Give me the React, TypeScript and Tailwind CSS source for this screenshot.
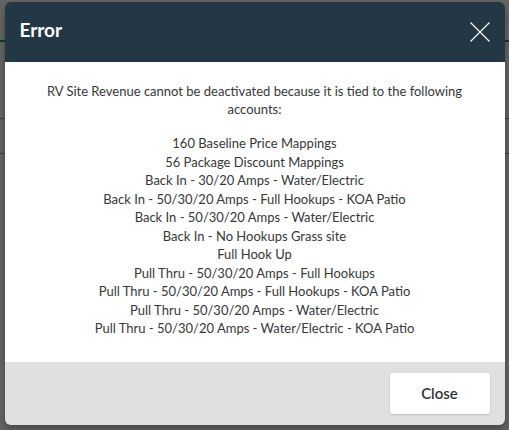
const ACCOUNTS = [
  '160 Baseline Price Mappings',
  '56 Package Discount Mappings',
  'Back In - 30/20 Amps - Water/Electric',
  'Back In - 50/30/20 Amps - Full Hookups - KOA Patio',
  'Back In - 50/30/20 Amps - Water/Electric',
  'Back In - No Hookups Grass site',
  'Full Hook Up',
  'Pull Thru - 50/30/20 Amps - Full Hookups',
  'Pull Thru - 50/30/20 Amps - Full Hookups - KOA Patio',
  'Pull Thru - 50/30/20 Amps - Water/Electric',
  'Pull Thru - 50/30/20 Amps - Water/Electric - KOA Patio',
]

export default function App() {
  return (
    <div
      className="relative h-[430px] w-[509px] overflow-hidden bg-white"
      style={{ fontFamily: 'Lato, "Open Sans", sans-serif' }}
    >
      {/* page behind the overlay */}
      <div className="flex flex-col">
        <div className="h-[42px] border-b-2 border-[#2e9a4a]" />
        <div className="h-[77px] border-b border-[#999]" />
        <div className="h-[35px] border-b border-[#999]" />
      </div>

      {/* overlay */}
      <div className="absolute inset-0 flex justify-center bg-black/60 pt-[2px]">
        <div className="flex h-[423px] w-[500px] flex-col overflow-hidden rounded-[6px] shadow-[0_4px_10px_rgba(0,0,0,0.35)]">
          {/* Header */}
          <div className="flex h-[60px] shrink-0 items-center justify-between bg-[#243744] pb-[3px] pl-[15px] pr-[15px]">
            <h2 className="text-[19px] font-bold text-white">Error</h2>
            <button className="mt-[3px] text-white">
              <svg width="20" height="20" viewBox="0 0 20 20" fill="none" stroke="currentColor" strokeWidth="1.1">
                <line x1="0.5" y1="0.5" x2="19.5" y2="19.5" />
                <line x1="19.5" y1="0.5" x2="0.5" y2="19.5" />
              </svg>
            </button>
          </div>

          {/* Content */}
          <div className="flex-1 bg-white px-[30px] pt-[20px] text-center text-[13px] text-[#383838]">
            <p className="leading-[18px]">
              RV Site Revenue cannot be deactivated because it is tied to the following accounts:
            </p>
            <ul className="mt-[16px] leading-[18.5px]">
              {ACCOUNTS.map((a) => (
                <li key={a}>{a}</li>
              ))}
            </ul>
          </div>

          {/* Footer */}
          <div className="flex h-[63px] shrink-0 items-center justify-end bg-[#e0e0e0] pr-[15px]">
            <button className="h-[41px] w-[100px] rounded-[3px] bg-white text-[15px] font-semibold text-[#333] shadow-[0_1px_2px_rgba(0,0,0,0.15)]">
              Close
            </button>
          </div>
        </div>
      </div>
    </div>
  )
}
